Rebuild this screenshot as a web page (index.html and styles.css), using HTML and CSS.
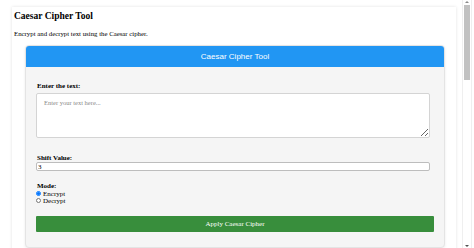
FILE: index.html
```html
<!DOCTYPE html>
<html lang="en">
<head>
    <meta charset="UTF-8">
    <meta name="viewport" content="width=device-width, initial-scale=1.0">
    <title>Caesar Cipher Tool</title>
    <link rel="stylesheet" href="styles.css">
</head>
<body>
    <div class="viewport">
        <div class="content">
            <div class="page">
                <h1>Caesar Cipher Tool</h1>
                <p class="intro">Encrypt and decrypt text using the Caesar cipher.</p>

                <div class="card">
                    <div class="card-header">Caesar Cipher Tool</div>
                    <div class="card-body">
                        <label for="text">Enter the text:</label>
                        <textarea id="text" placeholder="Enter your text here..."></textarea>

                        <label for="shift" class="spaced">Shift Value:</label>
                        <input type="number" id="shift" value="3">

                        <label class="mode-label">Mode:</label>
                        <div class="radio-row">
                            <input type="radio" name="mode" id="encrypt" checked>
                            <label for="encrypt">Encrypt</label>
                        </div>
                        <div class="radio-row">
                            <input type="radio" name="mode" id="decrypt">
                            <label for="decrypt">Decrypt</label>
                        </div>

                        <button class="apply">Apply Caesar Cipher</button>
                    </div>
                </div>
            </div>
        </div>
        <!-- fake scrollbar, the frame scrolls in the original -->
        <div class="scrollbar">
            <div class="arrow up"></div>
            <div class="thumb"></div>
            <div class="track"></div>
            <div class="arrow down"></div>
        </div>
    </div>
</body>
</html>
```

FILE: styles.css
```css
body {
    margin: 0;
    padding: 0;
    background: #fff;
    font-family: "Liberation Serif", "Times New Roman", serif;
    color: #000;
}

.viewport {
    display: flex;
    height: 248px;
    overflow: hidden;
}

.content {
    flex: 1;
    overflow: hidden;
}

.scrollbar {
    display: flex;
    flex-direction: column;
    align-items: center;
    width: 8px;
    margin-right: 2px;
    border-left: 1px solid #efefef;
    border-right: 1px solid #efefef;
}

.scrollbar .arrow {
    width: 0;
    height: 0;
    margin: 1px 0;
    border-left: 2px solid transparent;
    border-right: 2px solid transparent;
}

.scrollbar .up {
    border-bottom: 2px solid #8a8a8a;
}

.scrollbar .down {
    border-top: 2px solid #505050;
}

.scrollbar .thumb {
    width: 6px;
    height: 75px;
    margin-top: 1px;
    background: #c1c1c1;
}

.scrollbar .track {
    flex: 1;
}

.page {
    width: 444px;
    margin: 7px 0 0 12px;
    padding: 3px 0 20px 0;
    background: #fff;
    box-shadow: 0 0 3px rgba(0, 0, 0, 0.12);
}

.page h1 {
    margin: 0 0 0 2px;
    font-size: 9.5px;
    line-height: 12px;
    font-weight: bold;
}

.intro {
    margin: 8px 0 0 2px;
    font-size: 6.8px;
    line-height: 8px;
}

.card {
    margin: 7px 11px 0 13px;
    background: #f5f5f5;
    border: 1px solid #e4e4e4;
    border-radius: 4px;
    box-shadow: 0 1px 3px rgba(0, 0, 0, 0.08);
    overflow: hidden;
}

.card-header {
    height: 21px;
    line-height: 21px;
    text-align: center;
    background: #2196f3;
    color: #fff;
    font-family: "Liberation Sans", Arial, sans-serif;
    font-size: 8px;
}

.card-body {
    padding: 15px 14px 15px 10px;
}

.card-body label {
    display: block;
    font-size: 7px;
    line-height: 8px;
    font-weight: bold;
    margin-left: 1px;
}

.card-body textarea {
    display: block;
    box-sizing: border-box;
    width: 394px;
    height: 45px;
    margin-top: 3px;
    padding: 5px 7px;
    border: 1px solid #d4d4d4;
    border-radius: 2px;
    background: #fff;
    font-family: inherit;
    font-size: 6.5px;
    resize: vertical;
}

.card-body textarea::placeholder {
    color: #8a8a8a;
}

.card-body .spaced {
    margin-top: 16px;
}

.card-body input[type="number"] {
    display: block;
    box-sizing: border-box;
    width: 394px;
    height: 9px;
    margin: 0;
    padding: 0 1px;
    border: 1px solid #bdbdbd;
    border-radius: 2px;
    font-family: inherit;
    font-size: 7px;
    line-height: 7px;
    -moz-appearance: textfield;
}

.card-body input[type="number"]::-webkit-inner-spin-button {
    display: none;
}

.mode-label {
    margin-top: 11px;
}

.radio-row {
    display: flex;
    align-items: center;
    height: 7px;
}

.radio-row input {
    width: 5px;
    height: 5px;
    margin: 0 2px 0 0;
}

.radio-row label {
    font-weight: normal;
    margin: 0;
    font-size: 7px;
}

.apply {
    display: block;
    width: 398px;
    height: 16px;
    margin-top: 12px;
    padding: 0;
    border: none;
    border-radius: 1px;
    background: #388e3c;
    color: #fff;
    font-family: inherit;
    font-size: 7px;
    cursor: pointer;
}
```
